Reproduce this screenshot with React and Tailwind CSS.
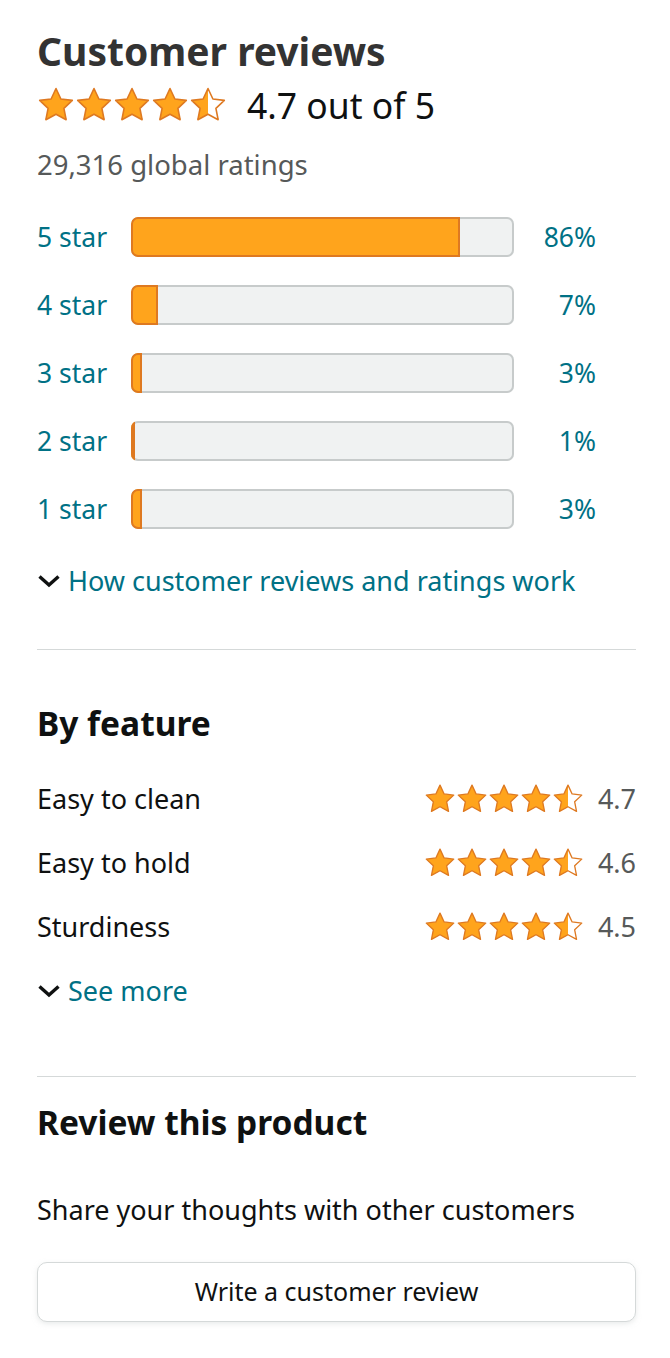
import { useId } from 'react'

const font = { fontFamily: '"Noto Sans", Roboto, Arial, sans-serif' }

function Star({ size, fill = 1 }) {
  const id = useId()
  return (
    <svg width={size} height={size} viewBox="0 0 24 24" className="shrink-0">
      <defs>
        <linearGradient id={id}>
          <stop offset={fill} stopColor="#ffa41c" />
          <stop offset={fill} stopColor="#ffffff" />
        </linearGradient>
      </defs>
      <path
        d="M12 1.6l3.1 6.6 7.2.9-5.3 5 1.4 7.2L12 17.8l-6.4 3.5L7 14.1 1.7 9.1l7.2-.9z"
        fill={`url(#${id})`}
        stroke="#de7921"
        strokeWidth="1"
        strokeLinejoin="round"
      />
    </svg>
  )
}

function Stars({ size }) {
  return (
    <div className="flex items-center">
      {[1, 1, 1, 1, 0.5].map((f, i) => (
        <Star key={i} size={size} fill={f} />
      ))}
    </div>
  )
}

function Chevron() {
  return (
    <svg width="24" height="14" viewBox="0 0 24 14" className="shrink-0">
      <polyline points="2.5,2.5 12,11 21.5,2.5" fill="none" stroke="#0f1111" strokeWidth="3.4" />
    </svg>
  )
}

const bars = [
  { label: '5 star', pct: 86 },
  { label: '4 star', pct: 7 },
  { label: '3 star', pct: 3 },
  { label: '2 star', pct: 1 },
  { label: '1 star', pct: 3 },
]

const features = [
  { name: 'Easy to clean', score: '4.7' },
  { name: 'Easy to hold', score: '4.6' },
  { name: 'Sturdiness', score: '4.5' },
]

export default function App() {
  return (
    <div style={font} className="min-h-[1358px] bg-white pl-[37px] pr-[34px] text-[#0f1111]">
      {/* Summary */}
      <h2 className="pt-[29px] text-[39px] font-bold leading-[44px] text-[#333333]">Customer reviews</h2>
      <div className="mt-[12px] flex h-[40px] items-center">
        <Stars size={38} />
        <span className="ml-[20px] text-[35.5px] leading-[40px] text-[#0f1111]">4.7 out of 5</span>
      </div>
      <p className="mt-[22px] text-[27.5px] leading-[36px] text-[#565959]">29,316 global ratings</p>

      {/* Histogram */}
      <div className="mt-[34px] flex flex-col gap-[28px]">
        {bars.map((b) => (
          <div key={b.label} className="flex h-[40px] items-center">
            <span className="w-[94px] text-[26.5px] leading-[36px] text-[#007185]">{b.label}</span>
            <div className="h-[40px] w-[383px] overflow-hidden rounded-[7px] bg-[#f0f2f2] shadow-[inset_0_0_0_2px_#c7cbcb]">
              <div
                className="h-full min-w-[3px] rounded-l-[7px] bg-[#ffa41c] shadow-[inset_0_0_0_2px_#de7921]"
                style={{ width: `${b.pct}%` }}
              />
            </div>
            <span className="w-[82px] text-right text-[26.5px] leading-[36px] text-[#007185]">{b.pct}%</span>
          </div>
        ))}
      </div>

      <div className="mt-[34px] flex items-center gap-[7px]">
        <Chevron />
        <span className="text-[27px] leading-[36px] text-[#007185]">How customer reviews and ratings work</span>
      </div>

      <hr className="mt-[50px] border-t border-[#d5d9d9]" />

      {/* By feature */}
      <h3 className="mt-[53px] text-[33.5px] font-bold leading-[40px]">By feature</h3>
      <div className="mt-[36px] flex flex-col gap-[24px]">
        {features.map((f) => (
          <div key={f.name} className="flex h-[40px] items-center justify-between">
            <span className="text-[27px] leading-[36px]">{f.name}</span>
            <div className="flex items-center">
              <Stars size={32} />
              <span className="ml-[14px] text-[27px] leading-[36px] text-[#565959]">{f.score}</span>
            </div>
          </div>
        ))}
      </div>
      <div className="mt-[26px] flex items-center gap-[7px]">
        <Chevron />
        <span className="text-[27px] leading-[36px] text-[#007185]">See more</span>
      </div>

      <hr className="mt-[67px] border-t border-[#d5d9d9]" />

      {/* Review this product */}
      <h3 className="mt-[25px] text-[33.5px] font-bold leading-[40px]">Review this product</h3>
      <p className="mt-[50px] text-[27px] leading-[36px]">Share your thoughts with other customers</p>
      <button className="mt-[34px] flex h-[60px] w-full items-center justify-center rounded-[10px] border border-[#d5d9d9] bg-white text-[25px] text-[#0f1111] shadow-[0_2px_5px_rgba(213,217,217,0.5)]">
        Write a customer review
      </button>
    </div>
  )
}
